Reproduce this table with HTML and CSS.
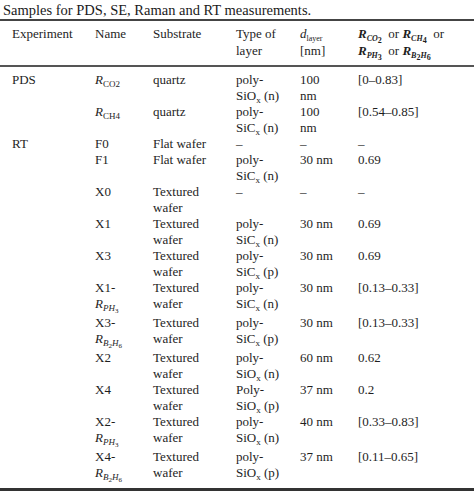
FILE: index.html
```html
<!DOCTYPE html>
<html>
<head>
<meta charset="utf-8">
<link rel="stylesheet" href="styles.css">
</head>
<body>
<div class="caption">Samples for PDS, SE, Raman and RT measurements.</div>
<table class="tbl">
<thead>
<tr>
<th class="c1">Experiment</th>
<th class="c2">Name</th>
<th class="c3">Substrate</th>
<th class="c4">Type of<br>layer</th>
<th class="c5"><i>d</i><sub>layer</sub><br>[nm]</th>
<th class="c6"><b><i>R</i><sub><i>CO</i><sub>2</sub></sub></b> &nbsp;or <b><i>R</i><sub><i>CH</i><sub>4</sub></sub></b> &nbsp;or<br><b><i>R</i><sub><i>PH</i><sub>3</sub></sub></b> &nbsp;or <b><i>R</i><sub><i>B</i><sub>2</sub><i>H</i><sub>6</sub></sub></b></th>
</tr>
</thead>
<tbody>
<tr class="first"><td>PDS</td><td><i>R</i><sub>CO2</sub></td><td>quartz</td><td>poly-<br>SiO<sub>x</sub> (n)</td><td>100<br>nm</td><td>[0–0.83]</td></tr>
<tr><td></td><td><i>R</i><sub>CH4</sub></td><td>quartz</td><td>poly-<br>SiC<sub>x</sub> (n)</td><td>100<br>nm</td><td>[0.54–0.85]</td></tr>
<tr><td>RT</td><td>F0</td><td>Flat wafer</td><td>–</td><td>–</td><td>–</td></tr>
<tr><td></td><td>F1</td><td>Flat wafer</td><td>poly-<br>SiC<sub>x</sub> (n)</td><td>30 nm</td><td>0.69</td></tr>
<tr><td></td><td>X0</td><td>Textured<br>wafer</td><td>–</td><td>–</td><td>–</td></tr>
<tr><td></td><td>X1</td><td>Textured<br>wafer</td><td>poly-<br>SiC<sub>x</sub> (n)</td><td>30 nm</td><td>0.69</td></tr>
<tr><td></td><td>X3</td><td>Textured<br>wafer</td><td>poly-<br>SiC<sub>x</sub> (p)</td><td>30 nm</td><td>0.69</td></tr>
<tr class="tall"><td></td><td>X1-<br><i>R</i><sub><i>PH</i><sub>3</sub></sub></td><td>Textured<br>wafer</td><td>poly-<br>SiC<sub>x</sub> (n)</td><td>30 nm</td><td>[0.13–0.33]</td></tr>
<tr class="tall"><td></td><td>X3-<br><i>R</i><sub><i>B</i><sub>2</sub><i>H</i><sub>6</sub></sub></td><td>Textured<br>wafer</td><td>poly-<br>SiC<sub>x</sub> (p)</td><td>30 nm</td><td>[0.13–0.33]</td></tr>
<tr><td></td><td>X2</td><td>Textured<br>wafer</td><td>poly-<br>SiO<sub>x</sub> (n)</td><td>60 nm</td><td>0.62</td></tr>
<tr><td></td><td>X4</td><td>Textured<br>wafer</td><td>Poly-<br>SiO<sub>x</sub> (p)</td><td>37 nm</td><td>0.2</td></tr>
<tr class="tall"><td></td><td>X2-<br><i>R</i><sub><i>PH</i><sub>3</sub></sub></td><td>Textured<br>wafer</td><td>poly-<br>SiO<sub>x</sub> (n)</td><td>40 nm</td><td>[0.33–0.83]</td></tr>
<tr class="last"><td></td><td>X4-<br><i>R</i><sub><i>B</i><sub>2</sub><i>H</i><sub>6</sub></sub></td><td>Textured<br>wafer</td><td>poly-<br>SiO<sub>x</sub> (p)</td><td>37 nm</td><td>[0.11–0.65]</td></tr>
</tbody>
</table>
</body>
</html>
```
FILE: styles.css
```css
html, body {
  margin: 0;
  padding: 0;
  background: #fff;
}
body {
  font-family: "Liberation Serif", "DejaVu Serif", serif;
  color: #1e1e1e;
  font-size: 13px;
}
.caption {
  font-size: 14.5px;
  padding: 2px 0 0 3px;
  height: 17px;
  line-height: 16px;
  color: #1a1a1a;
}
.tbl {
  width: 474px;
  border-collapse: collapse;
  border-top: 2px solid #444;
  border-bottom: 3px solid #333;
}
.tbl th, .tbl td {
  text-align: left;
  vertical-align: top;
  font-weight: normal;
  line-height: 16px;
  padding: 0;
}
.tbl thead th {
  padding-top: 4px;
  padding-bottom: 6px;
  border-bottom: 2px solid #555;
  line-height: 17px;
  white-space: nowrap;
}
.tbl tr.first td { padding-top: 5px; }
.tbl tr.tall td { padding-bottom: 3px; }
.tbl tr.last td { padding-bottom: 7px; }
.c1 { width: 83px; padding-left: 12px !important; }
.tbl td:first-child { padding-left: 12px; }
.c2 { width: 58px; }
.c3 { width: 83px; }
.c4 { width: 64px; }
.c5 { width: 58px; }
sub {
  font-size: 9px;
  line-height: 0;
  vertical-align: -3px;
}
sub sub { font-size: 7px; vertical-align: -2px; }
th sub { font-size: 8px; }
```
